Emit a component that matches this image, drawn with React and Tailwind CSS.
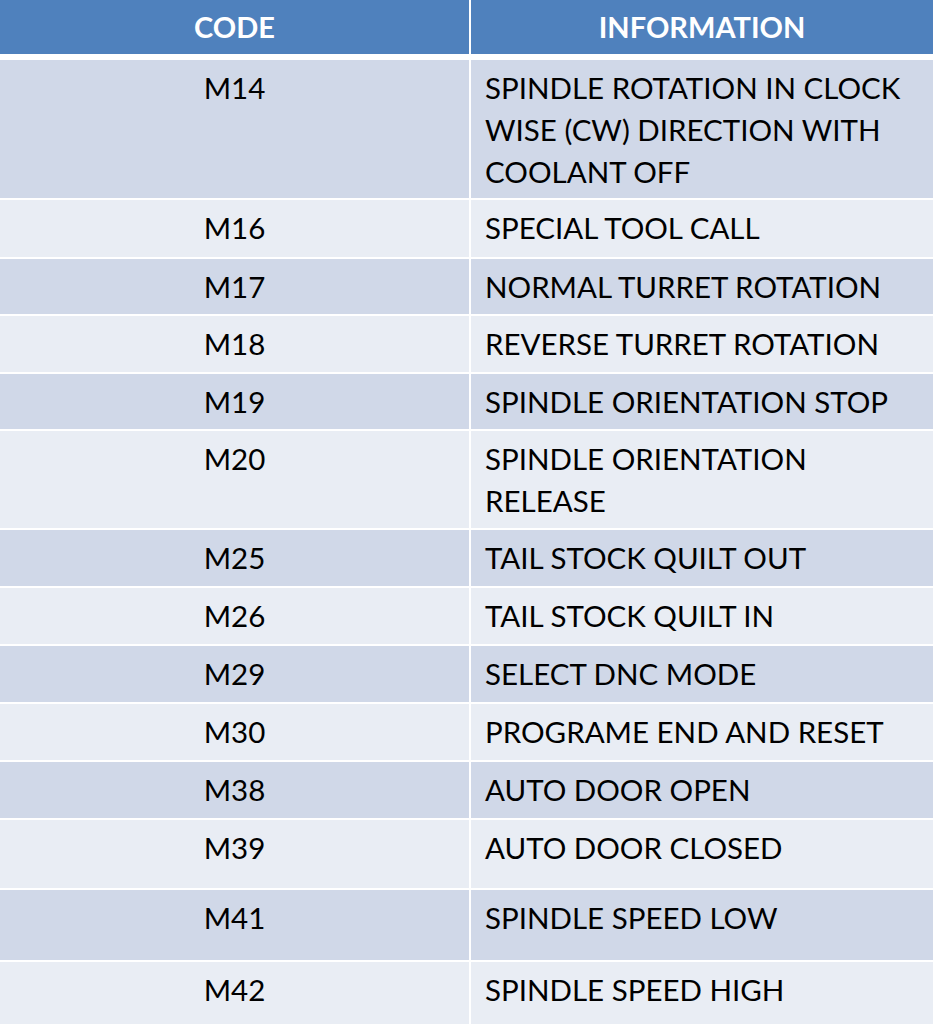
import React from 'react';

const rows = [
  { code: 'M14', info: ['SPINDLE ROTATION IN CLOCK', 'WISE (CW) DIRECTION WITH', 'COOLANT OFF'], h: 'h-[138px]' },
  { code: 'M16', info: ['SPECIAL TOOL CALL'], h: 'h-[57px]' },
  { code: 'M17', info: ['NORMAL TURRET ROTATION'], h: 'h-[55px]' },
  { code: 'M18', info: ['REVERSE TURRET ROTATION'], h: 'h-[56px]' },
  { code: 'M19', info: ['SPINDLE ORIENTATION STOP'], h: 'h-[55px]' },
  { code: 'M20', info: ['SPINDLE ORIENTATION', 'RELEASE'], h: 'h-[97px]' },
  { code: 'M25', info: ['TAIL STOCK QUILT OUT'], h: 'h-[56px]' },
  { code: 'M26', info: ['TAIL STOCK QUILT IN'], h: 'h-[56px]' },
  { code: 'M29', info: ['SELECT DNC MODE'], h: 'h-[56px]' },
  { code: 'M30', info: ['PROGRAME END AND RESET'], h: 'h-[56px]' },
  { code: 'M38', info: ['AUTO DOOR OPEN'], h: 'h-[56px]' },
  { code: 'M39', info: ['AUTO DOOR CLOSED'], h: 'h-[68px]' },
  { code: 'M41', info: ['SPINDLE SPEED LOW'], h: 'h-[70px]' },
  { code: 'M42', info: ['SPINDLE SPEED HIGH'], h: 'h-[70px]' },
];

const App = () => {
  return (
    <div className="w-[933px] h-[1024px] overflow-hidden bg-white font-['Lato',sans-serif] text-black">
      <div className="flex flex-col gap-[2px]">
        {/* header */}
        <div className="flex gap-[2px] h-[54px] mb-[4px]">
          <div className="w-[469px] bg-[#4f81bd] flex items-center justify-center text-white font-bold text-[29px]">
            CODE
          </div>
          <div className="flex-1 bg-[#4f81bd] flex items-center justify-center text-white font-bold text-[29px]">
            INFORMATION
          </div>
        </div>

        {rows.map((row, i) => {
          const bg = i % 2 === 0 ? 'bg-[#d0d8e8]' : 'bg-[#e9edf4]';
          return (
            <div key={row.code} className={`flex gap-[2px] ${row.h}`}>
              <div className={`w-[469px] ${bg} text-center pt-[7px] text-[29.5px] leading-[42px]`}>
                {row.code}
              </div>
              <div className={`flex-1 ${bg} pl-[14px] pt-[7px] text-[29.5px] leading-[42px]`}>
                {row.info.map((line) => (
                  <div key={line} className="whitespace-nowrap">{line}</div>
                ))}
              </div>
            </div>
          );
        })}
      </div>
    </div>
  );
};

export default App;
